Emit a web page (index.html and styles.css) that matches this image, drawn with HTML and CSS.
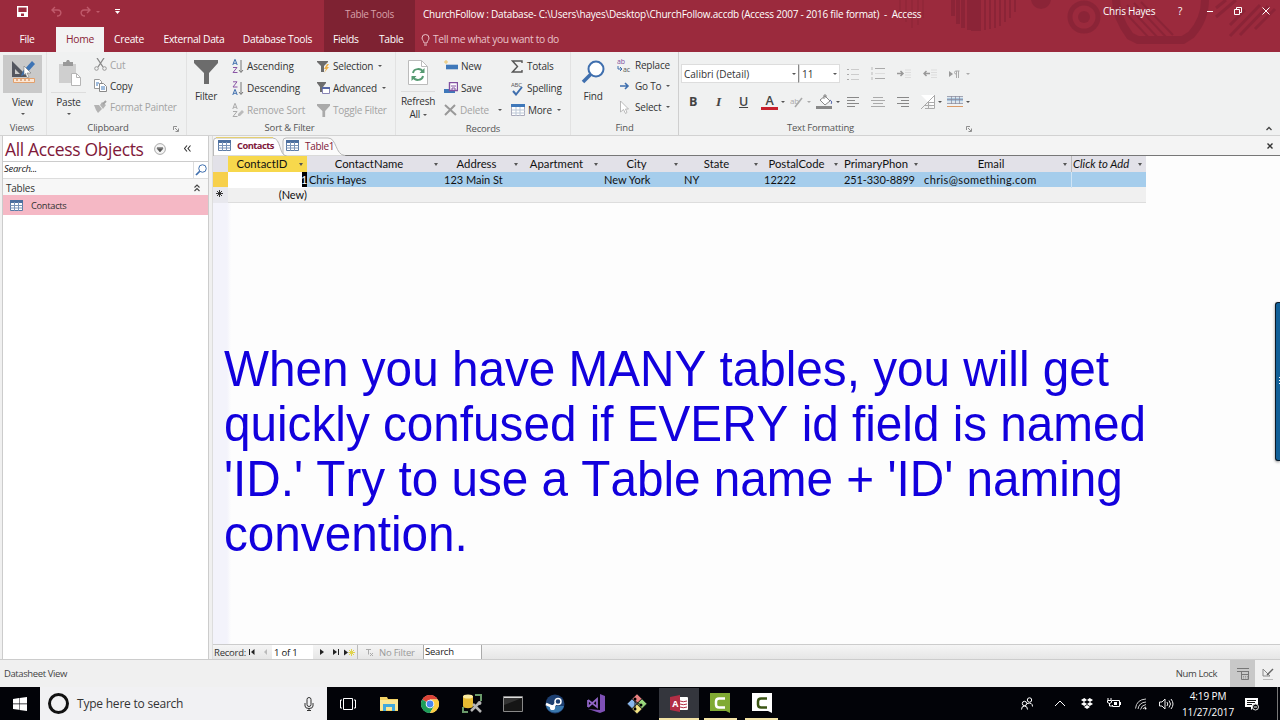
FILE: index.html
```
<!DOCTYPE html>
<html lang="en">
  <head>
    <meta charset="UTF-8" />
    <meta name="viewport" content="width=device-width, initial-scale=1.0" />
    <title>ChurchFollow : Database - Access</title>
    <link rel="stylesheet" href="styles.css">
  </head>
  <body>
    <svg class="defs" width="0" height="0">
      <symbol id="grid" viewBox="0 0 13 11">
        <path d="M.5.5h12v10H.5z" fill="#fff" stroke="#5d7ca6" />
        <path d="M0 0h13v3H0z" fill="#4c6f9f" />
        <path d="M.5 5.5h12M.5 8h12M4.5 2v9M8.5 2v9" stroke="#7a94b8" fill="none" />
      </symbol>
      <symbol id="funnel" viewBox="0 0 24 24">
        <path d="M0 0h24v3l-9 10v11h-5V13L0 3z" />
      </symbol>
      <symbol id="lens" viewBox="0 0 24 24">
        <circle cx="15" cy="9" r="7.5" fill="#fff" stroke="#3f6fae" stroke-width="2" />
        <path d="M9.5 14.500 2 22" stroke="#3f6fae" stroke-width="3.500" />
      </symbol>
      <symbol id="launch" viewBox="0 0 6 6">
        <path d="M.5 4V.5H4M2 2l3 3M5.500 2.500v3h-3" fill="none" stroke="#777" stroke-width=".8" />
      </symbol>
    </svg>

    <header class="top">
      <svg class="pattern" width="430" height="52" viewBox="0 0 430 52">
        <g stroke="#842235" stroke-width="2" fill="none" opacity=".65">
          <path d="M50 0v14M56 0v22M62 0v28M68 0v25M73 0v18" stroke-width="1" />
          <path d="M103 0v16M108 0v24M113 0v28M119 0v30" stroke-width="4" />
          <path d="M126 0v31" stroke-width="10" />
          <path d="M135 0v30M140 0v29M145 0v28M150 0v26M155 0v22M160 0v18M165 0v12" />
          <circle cx="191" cy="-1" r="9" fill="#842235" />
          <circle cx="234" cy="17" r="14" stroke-width="5" />
          <circle cx="234" cy="17" r="6" fill="#842235" stroke="none" />
          <path d="M266 0c0 12 5 24 14 36l8 4h45l8-5c9-10 14-22 14-35" stroke-width="8" />
          <path d="m270 7 30 32M277 5l32 34M284 3l32 34M291 2l32 33" />
          <path d="m395 10-15 15M410 5l-30 31M418 6l-28 29M425 9l-20 20M386 0l-20 17M376 0l-10 8" stroke-width="3" />
        </g>
      </svg>
      <div class="titlebar">
        <div class="quick">
          <svg width="11" height="11" viewBox="0 0 11 11"><path d="M.7.7h9.600v9.600H.7z" fill="none" stroke="#fff" stroke-width="1.400" /><path d="M1 6h9v4H1z" fill="#fff" /><path d="M4 7.500h3V10H4z" fill="#9b2a3d" /></svg>
          <svg class="undo" width="11" height="11" viewBox="0 0 11 11"><path d="M4 1 1 4l3 3M1 4h6c4 0 4 6-1 6" fill="none" stroke="#c05a6b" stroke-width="1.400" /></svg>
          <svg class="redo" width="11" height="11" viewBox="0 0 11 11"><path d="m7 1 3 3-3 3m3-3H4c-4 0-4 6 1 6" fill="none" stroke="#c05a6b" stroke-width="1.400" /></svg>
          <i class="caret dim"></i>
          <svg class="custom" width="5" height="5" viewBox="0 0 5 5"><path d="M0 .5h5" stroke="#fff" /><path d="M0 2h5L2.500 5z" fill="#fff" /></svg>
        </div>
        <div class="tools-title">Table Tools</div>
        <h1>ChurchFollow : Database- C:\Users\hayes\Desktop\ChurchFollow.accdb (Access 2007 - 2016 file format)&nbsp; -&nbsp; Access</h1>
        <div class="account">Chris Hayes</div>
        <div class="win">
          <span>?</span>
          <svg width="8" height="8" viewBox="0 0 8 8"><path d="M1 4.500h6" stroke="#fff" /></svg>
          <svg width="8" height="8" viewBox="0 0 8 8"><path d="M.5 2.500h5v5h-5zM2.500 2V.5h5v5H6" fill="none" stroke="#fff" /></svg>
          <svg width="8" height="8" viewBox="0 0 8 8"><path d="m.5.5 7 7m0-7-7 7" stroke="#fff" /></svg>
        </div>
      </div>
      <nav class="tabs">
        <a class="t-file">File</a>
        <a class="t-home active">Home</a>
        <a class="t-create">Create</a>
        <a class="t-ext">External Data</a>
        <a class="t-db">Database Tools</a>
        <div class="tools-tabs"><a>Fields</a><a>Table</a></div>
        <div class="tell">
          <svg width="9" height="12" viewBox="0 0 9 12"><path d="M3 9C3 7 1 6 1 4a3.500 3.500 0 0 1 7 0c0 2-2 3-2 5zM3 11h3" fill="none" stroke="#e9c3ca" /></svg>
          Tell me what you want to do
        </div>
      </nav>
    </header>

    <section class="ribbon">
      <div class="group g-views">
        <div class="body">
          <div class="big view">
            <div class="face">
              <svg width="26" height="26" viewBox="0 0 26 26">
                <path d="M2 1v16h16zm3 8 5 5H5z" fill="#53565f" fill-rule="evenodd" />
                <path d="m11 16 2-5L22 1l3 3-9 10z" fill="#3e74b5" />
                <path d="M3.500 18.500h21v4h-21z" fill="#fbe6d4" stroke="#e2a06c" />
                <path d="M7 19v2M11 19v2M15 19v2M19 19v2" stroke="#c9783d" />
                <path d="m14 6 7 7h-4l2 4-2 .5-1.500-4L14 15z" fill="#fff" stroke="#666" stroke-width=".5" />
              </svg>
            </div>
            <span>View</span><i class="caret"></i>
          </div>
        </div>
        <div class="label">Views</div>
      </div>

      <div class="group g-clip">
        <div class="body">
          <div class="big paste">
            <div class="face">
              <svg width="24" height="26" viewBox="0 0 24 26"><path d="M2 4h17v19H2z" fill="#cfcfcf" /><path d="M6 2h3l1-2h2l1 2h3v4H6z" fill="#999" /><path d="M14.500 13.500h5l4 4v8h-9z" fill="#fff" stroke="#b5b5b5" /><path d="M19.500 13.500v4h4" fill="none" stroke="#b5b5b5" /></svg>
            </div>
            <span>Paste</span><i class="caret"></i>
          </div>
          <div class="col tight">
            <div class="cmd off"><svg width="13" height="13" viewBox="0 0 13 13"><path d="m3 0 6 9M10 0 4 9" stroke="#888" stroke-width="1.300" /><circle cx="2.500" cy="10.500" r="1.800" fill="none" stroke="#999" /><circle cx="10.500" cy="10.500" r="1.800" fill="none" stroke="#999" /></svg>Cut</div>
            <div class="cmd"><svg width="13" height="13" viewBox="0 0 13 13"><path d="M.5.5h5l2 2v7h-7z" fill="#fff" stroke="#999" /><path d="M5.500 4.500h4l3 3v5h-7z" fill="#fff" stroke="#888" /><path d="M2 4h3M2 6h2M7 8h4M7 10h4" stroke="#3f78ba" /></svg>Copy</div>
            <div class="cmd off"><svg width="13" height="13" viewBox="0 0 13 13"><path d="M0 5h5l3 4-4 4-2-3zM6 5l2-3 4 3-3 4z" fill="#b3b3b3" /><path d="m9 4 3-3" stroke="#a2a2a2" stroke-width="2" /></svg>Format Painter</div>
          </div>
        </div>
        <div class="label">Clipboard<svg class="launch" width="6" height="6"><use href="#launch" /></svg></div>
      </div>

      <div class="group g-sort">
        <div class="body">
          <div class="big filter">
            <div class="face"><svg width="24" height="24" fill="#6c6c6c"><use href="#funnel" /></svg></div>
            <span>Filter</span>
          </div>
          <div class="col c-sort">
            <div class="cmd"><svg width="12" height="15" viewBox="0 0 12 15"><path d="m.8 6 2-5.500h.4l2 5.500M1.500 4.300h3" fill="none" stroke="#3f6fae" /><path d="M1 8.500h4L1 13.500h4.500" fill="none" stroke="#8a55a5" /><path d="M9 1v12M7 11l2 2.500 2-2.500" fill="none" stroke="#777" /></svg>Ascending</div>
            <div class="cmd"><svg width="12" height="15" viewBox="0 0 12 15"><path d="M1 .8h4L1 6h4.500" fill="none" stroke="#8a55a5" /><path d="m.8 14 2-5.500h.4l2 5.500M1.500 12.300h3" fill="none" stroke="#3f6fae" /><path d="M9 1v12M7 11l2 2.500 2-2.500" fill="none" stroke="#777" /></svg>Descending</div>
            <div class="cmd off"><svg width="12" height="15" viewBox="0 0 12 15"><path d="m.8 6 2-5.500h.4l2 5.500M1.500 4.300h3M1 8.500h4L1 13.500h4.500" fill="none" stroke="#aaa" /><path d="m6 11 4-4 2 2-4 4H6z" fill="#bbb" /></svg>Remove Sort</div>
          </div>
          <div class="col c-select">
            <div class="cmd"><svg width="13" height="13" viewBox="0 0 13 13"><path d="M0 1h11v1L7 6v6H4V6L0 2z" fill="#6c6c6c" /><path d="m10 4-3 5h2l-2 4 5-6h-2l2-3z" fill="#eeb14b" /></svg>Selection<i class="caret"></i></div>
            <div class="cmd"><svg width="13" height="13" viewBox="0 0 13 13"><path d="M0 0h9v1L6 5v5H3V5L0 1z" fill="#6c6c6c" /><path d="M5.500 5.500h7v6h-7z" fill="#fff" stroke="#8884b5" /><path d="M5 5h8v2H5z" fill="#5566a6" /></svg>Advanced<i class="caret"></i></div>
            <div class="cmd off"><svg width="13" height="13" viewBox="0 0 24 24" fill="#aaa"><use href="#funnel" /></svg>Toggle Filter</div>
          </div>
        </div>
        <div class="label">Sort &amp; Filter</div>
      </div>

      <div class="group g-rec">
        <div class="body">
          <div class="big refresh">
            <div class="face">
              <svg width="20" height="25" viewBox="0 0 20 25"><path d="M.5.5h13l6 6v18H.5z" fill="#fff" stroke="#bbb" /><path d="M13.500.5v6h6" fill="none" stroke="#bbb" /><path d="M5 13c1-5 8-5 10-1M15 16c-1 5-8 5-10 1" fill="none" stroke="#569a72" stroke-width="2" /><path d="M16.500 8v5h-5zM3.500 21v-5h5z" fill="#569a72" /></svg>
            </div>
            <span>Refresh</span><span class="all">All <i class="caret"></i></span>
          </div>
          <div class="col c-new">
            <div class="cmd"><svg width="14" height="12" viewBox="0 0 14 12"><path d="M2 5h12v4H2z" fill="#3f78ba" /><path d="M2 4.500h12M2 9.500h12" stroke="#bcd" /><path d="M2 0v4M0 2h4" stroke="#ecc469" /></svg>New</div>
            <div class="cmd"><svg width="14" height="12" viewBox="0 0 14 12"><path d="M0 7h11v4H0z" fill="#3f78ba" /><path d="M5.500.5h8v8h-8z" fill="#fff" stroke="#8150a0" stroke-width="1.400" /><path d="M7 4h5M8 8V6h3v2" stroke="#8150a0" fill="none" /></svg>Save</div>
            <div class="cmd off"><svg width="13" height="12" viewBox="0 0 13 12"><path d="m1 1 11 10M11 1 1 11" stroke="#999" stroke-width="2" /></svg>Delete<i class="caret wide"></i></div>
          </div>
          <div class="col c-tot">
            <div class="cmd"><svg width="13" height="13" viewBox="0 0 13 13"><path d="M11 3V1H1.500l5 5.500-5 5.500H11v-2" fill="none" stroke="#555" stroke-width="1.400" /></svg>Totals</div>
            <div class="cmd"><svg width="13" height="15" viewBox="0 0 13 15"><text x="0" y="5.500" class="abc">ABC</text><path d="m2 10 3 3.500L11 6" fill="none" stroke="#3f6fae" stroke-width="2" /></svg>Spelling</div>
            <div class="cmd"><svg width="14" height="12" viewBox="0 0 14 12"><path d="M.5.5h13v11H.5z" fill="#fff" stroke="#aab" /><path d="M0 0h14v3H0z" fill="#3f78ba" /><path d="M1 6h13M1 9h13M5 3v9M9 3v9" stroke="#bbc7d6" /></svg>More<i class="caret"></i></div>
          </div>
        </div>
        <div class="label">Records</div>
      </div>

      <div class="group g-find">
        <div class="body">
          <div class="big find">
            <div class="face"><svg width="24" height="24"><use href="#lens" /></svg></div>
            <span>Find</span>
          </div>
          <div class="col tight c-find">
            <div class="cmd"><svg width="15" height="16" viewBox="0 0 15 16"><text x="0" y="7" class="ab">ab</text><text x="6" y="15" class="ac">ac</text><path d="M1 9v3h4M3 10l2 2-2 2" fill="none" stroke="#3f6fae" /></svg>Replace</div>
            <div class="cmd"><svg width="15" height="10" viewBox="0 0 15 10"><path d="M3 5h8M8 2l3 3-3 3" fill="none" stroke="#3f6fae" stroke-width="1.600" /></svg>Go To<i class="caret"></i></div>
            <div class="cmd"><svg width="15" height="14" viewBox="0 0 15 14"><path d="M3.500 1v11l3-2.500 2 4 1.500-1-1.500-3.500h3z" fill="#fff" stroke="#aaa" stroke-width=".8" /></svg>Select<i class="caret"></i></div>
          </div>
        </div>
        <div class="label">Find</div>
      </div>

      <div class="group g-text">
        <div class="body textbody">
          <div class="row">
            <div class="combo font">Calibri (Detail)<i class="caret"></i></div>
            <div class="combo size">11<i class="caret"></i></div>
            <svg class="i1" width="12" height="12" viewBox="0 0 12 12"><path d="M0 1.500h2M0 6.500h2M0 11.500h2" stroke="#aaa" /><path d="M4 1.500h8M4 6.500h8M4 11.500h8" stroke="#ccc" /></svg>
            <svg width="14" height="13" viewBox="0 0 14 13"><path d="M1 0v3M1 5v3M1 10v3" stroke="#bbb" /><path d="M4 1.500h10M4 11.500h10" stroke="#aaa" /><path d="M4 6.500h10" stroke="#ddd" /></svg>
            <svg width="14" height="9" viewBox="0 0 14 9"><path d="M0 4.500h6M3.500 2 6 4.500 3.500 7" fill="none" stroke="#999" stroke-width="1.500" /><path d="M8 1h6M8 3.500h6M8 6h6M8 8.500h6" stroke="#ddd" /></svg>
            <svg width="14" height="9" viewBox="0 0 14 9"><path d="M7 4.500H1M3.500 2 1 4.500 3.500 7" fill="none" stroke="#999" stroke-width="1.500" /><path d="M8 1h6M8 3.500h6M8 6h6M8 8.500h6" stroke="#ddd" /></svg>
            <svg width="11" height="8" viewBox="0 0 11 8"><path d="m0 1 4 3-4 3z" fill="#999" /><path d="M7.500 1v7M9.500 1v7M10.500 1H7a1.500 1.500 0 0 0 0 3" fill="none" stroke="#aaa" /></svg>
            <i class="caret gray"></i>
          </div>
          <div class="row fmt">
            <b>B</b><em>I</em><u>U</u>
            <span class="fc">A</span><i class="caret"></i>
            <svg class="hl" width="13" height="12" viewBox="0 0 13 12"><text x="0" y="8" class="aby">ab</text><path d="m5 11 7-9" stroke="#aaa" stroke-width="1.600" /></svg><i class="caret gray"></i>
            <svg class="bucket" width="17" height="15" viewBox="0 0 17 15"><path d="m4 6 5-4 5 5-5 4z" fill="#fff" stroke="#888" /><path d="M8 5V1h2v3" fill="none" stroke="#888" /><path d="M14 6c2 1 2 3 1 4" stroke="#56a" fill="none" /><path d="M0 12h16v3H0z" fill="#888" /></svg><i class="caret"></i>
            <svg class="al first-al" width="12" height="10" viewBox="0 0 12 10"><path d="M0 .5h12M0 3.500h8M0 6.500h12M0 9.500h8" stroke="#888" /></svg>
            <svg class="al" width="14" height="10" viewBox="0 0 14 10"><path d="M2 .5h10M0 3.500h14M2 6.500h10M0 9.500h14" stroke="#aaa" /></svg>
            <svg class="al" width="12" height="10" viewBox="0 0 12 10"><path d="M0 .5h12M4 3.500h8M0 6.500h12M4 9.500h8" stroke="#888" /></svg>
            <svg class="gl" width="14" height="14" viewBox="0 0 14 14"><path d="M0 0h14v14z" fill="#fff" /><path d="M0 14 14 0M7.500 7v7M7 7.500h7M4 10.500h10M4 13.500h9.500V1" fill="none" stroke="#aaa" /></svg><i class="caret"></i>
            <svg class="alt" width="16" height="12" viewBox="0 0 16 12"><path d="M0 0h16v8H0z" fill="#dde6ee" /><path d="M0 2h16v3H0z" fill="#a9c4dc" /><path d="M0 .5h16M0 3.500h16M0 7.500h16M4.500 0v8M8.500 0v8M12.500 0v8" stroke="#889" stroke-width=".7" /><path d="M0 10.500h16" stroke="#db9b68" /></svg><i class="caret"></i>
          </div>
        </div>
        <div class="label">Text Formatting<svg class="launch" width="6" height="6"><use href="#launch" /></svg></div>
      </div>
      <svg class="collapse" width="6" height="5" viewBox="0 0 6 5"><path d="m.5 4 2.500-2.500L5.500 4" fill="none" stroke="#444" stroke-width="1.300" /></svg>
    </section>

    <main class="work">
      <aside class="nav">
        <div class="nav-head">
          <h2>All Access Objects</h2>
          <svg class="drop" width="12" height="12" viewBox="0 0 12 12"><circle cx="6" cy="6" r="5.400" fill="#f4f4f4" stroke="#aaa" /><path d="M3 4.500h6M3 5.500h6L6 9z" fill="#555" stroke="#555" stroke-width=".6" /></svg>
          <svg width="7" height="7" viewBox="0 0 7 7"><path d="M3 .5.500 3.500l2.500 3M6.500.5 4 3.500l2.500 3" fill="none" stroke="#333" stroke-width="1.100" /></svg>
        </div>
        <div class="nav-search"><span>Search...</span><svg width="12" height="12" viewBox="0 0 24 24"><use href="#lens" /></svg></div>
        <div class="nav-group">Tables<svg width="6" height="8" viewBox="0 0 6 8"><path d="M.5 3.500 3 1l2.500 2.500M.5 7 3 4.500 5.500 7" fill="none" stroke="#444" stroke-width="1.100" /></svg></div>
        <div class="nav-item"><svg width="13" height="11"><use href="#grid" /></svg>Contacts</div>
      </aside>

      <section class="doc">
        <div class="doc-tabs">
          <svg class="tab-shape" width="140" height="20" viewBox="0 0 140 20">
            <path d="M70 20V5q0-3 3-3h42c9 0 7 17 17 17.500V20z" fill="#fbfbfb" stroke="#b9b9b9" />
            <path d="M.5 20V5q0-3 3-3h56c9 0 6 17 14 18z" fill="#fff" stroke="#b9b9b9" />
            <path d="M3 1.500h57" stroke="#e5cf70" />
          </svg>
          <div class="doc-tab first"><svg width="13" height="11"><use href="#grid" /></svg>Contacts</div>
          <div class="doc-tab"><svg width="13" height="11"><use href="#grid" /></svg>Table1</div>
          <svg class="close" width="6" height="6" viewBox="0 0 6 6"><path d="m.5.5 5 5m0-5-5 5" stroke="#333" stroke-width="1.400" /></svg>
        </div>
        <div class="sheet">
          <div class="line head">
            <div class="sel"></div>
            <div class="on">ContactID<i class="caret"></i></div>
            <div>ContactName<i class="caret"></i></div>
            <div>Address<i class="caret"></i></div>
            <div>Apartment<i class="caret"></i></div>
            <div>City<i class="caret"></i></div>
            <div>State<i class="caret"></i></div>
            <div>PostalCode<i class="caret"></i></div>
            <div class="phone">PrimaryPhon<i class="caret"></i></div>
            <div>Email<i class="caret"></i></div>
            <div class="add">Click to Add<i class="caret"></i></div>
          </div>
          <div class="line current">
            <div class="sel"></div>
            <div class="id"><mark>1</mark></div>
            <div>Chris Hayes</div>
            <div>123 Main St</div>
            <div></div>
            <div>New York</div>
            <div>NY</div>
            <div>12222</div>
            <div class="number">251-330-8899</div>
            <div class="mail">chris@something.com</div>
            <div class="last"></div>
          </div>
          <div class="line new">
            <div class="sel"><svg width="7" height="7" viewBox="0 0 7 7"><path d="M3.500 0v7M0 3.500h7M1 1l5 5M6 1 1 6" stroke="#222" stroke-width=".9" /></svg></div>
            <div class="id">(New)</div>
          </div>
        </div>
        <p class="note">When you have MANY tables, you will get<br>quickly confused if EVERY id field is named<br>'ID.' Try to use a Table name + 'ID' naming<br>convention.</p>
        <div class="recbar">
          <span class="rec-label">Record:</span>
          <svg width="6" height="6" viewBox="0 0 6 6"><path d="M.5 0v6" stroke="#222" /><path d="M5.500 0v6L2 3z" fill="#222" /></svg>
          <svg class="prev" width="4" height="6" viewBox="0 0 4 6"><path d="M3 0v6L0 3z" fill="#bbb" /></svg>
          <span class="pos">1 of 1</span>
          <svg class="next" width="4" height="6" viewBox="0 0 4 6"><path d="M0 0v6l4-3z" fill="#222" /></svg>
          <svg class="end" width="6" height="6" viewBox="0 0 6 6"><path d="M5.500 0v6" stroke="#222" /><path d="M0 0v6l4-3z" fill="#222" /></svg>
          <svg class="newrec" width="11" height="7" viewBox="0 0 11 7"><path d="M0 .5v6l4-3z" fill="#222" /><path d="M7.500 0v7M4.500 3.500H11M5 1l5 5M10 1 5 6" stroke="#e0d34b" /></svg>
          <div class="nofilter"><svg width="7" height="7" viewBox="0 0 7 7"><path d="M0 .5h5M2.500.5v5M4 4l3 3M7 4 4 7" stroke="#aaa" /></svg>No Filter</div>
          <span class="rec-search">Search</span>
        </div>
      </section>
      <div class="side-tab"><i></i><i></i><i></i></div>
    </main>

    <footer class="status">
      <span>Datasheet View</span>
      <span class="num">Num Lock</span>
      <div class="vw on"><svg width="12" height="12" viewBox="0 0 12 12"><path d="M0 .5h12M0 3.500h12M4.500 3.500v8h7v-8M4.500 6.500h7" fill="none" stroke="#777" /><path d="M6 8.500h5M6 10h5" stroke="#999" stroke-dasharray="1 1" /></svg></div>
      <div class="vw"><svg width="12" height="12" viewBox="0 0 12 12"><path d="M1 1v7h7z" fill="none" stroke="#888" /><path d="m5 7 6-6" stroke="#666" stroke-width="1.500" /><path d="M1 11.500h10" stroke="#bbb" /></svg></div>
    </footer>

    <div class="taskbar">
      <div class="start"><svg width="14" height="14" viewBox="0 0 14 14"><path d="m0 2 6-.9v5.500H0zM6.500 1 14 0v6.600H6.500zM0 7.200h6v5.500L0 12zM6.500 7.200H14V14l-7.500-1z" fill="#fff" /></svg></div>
      <div class="search">
        <i class="ring"></i>Type here to search
        <svg width="10" height="14" viewBox="0 0 10 14"><path d="M3 2.500q0-2 2-2t2 2v5q0 2-2 2t-2-2zM1 6v3q0 2.500 4 2.500T9 9V6M5 11v2.500M3 13.500h4" fill="none" stroke="#333" /></svg>
      </div>
      <div class="apps">
        <div><svg width="16" height="12" viewBox="0 0 16 12"><path d="M3.500.5h9v11h-9zM2 2H.5v8H2M14 2h1.500v8H14" fill="none" stroke="#fff" /></svg></div>
        <div><svg width="18" height="15" viewBox="0 0 18 15"><path d="M0 1h7l1 2h10v12H0z" fill="#f3d365" /><path d="M0 4h18v10H0z" fill="#fbe796" /><path d="M3 15V8h12v7h-3v-4H6v4z" fill="#42a9dd" /></svg></div>
        <div><svg width="18" height="18" viewBox="0 0 18 18"><circle cx="9" cy="9" r="9" fill="#fff" /><path d="M9 9 1.200 4.500A9 9 0 0 1 16.800 4.500H9z" fill="#dc4437" /><path d="M9 9 1.200 4.500A9 9 0 0 0 9 18l4-6.800z" fill="#1d9d58" /><path d="M9 4.500h7.800A9 9 0 0 1 9 18l4-6.800z" fill="#fcce42" /><circle cx="9" cy="9" r="4.300" fill="#fff" /><circle cx="9" cy="9" r="3.400" fill="#4a87ee" /></svg></div>
        <div><svg width="20" height="19" viewBox="0 0 20 19"><path d="M1 2v10c0 3 10 3 10 0V2z" fill="#e6ba32" /><ellipse cx="6" cy="2.500" rx="5" ry="2" fill="#fbeb9f" /><path d="M13 1h6v6M1 13v5h5" fill="none" stroke="#6a9a6a" stroke-width="2" /><path d="m9 17 8-8m-6 1 8 8" stroke="#b5b5b5" stroke-width="2.500" /><circle cx="17.500" cy="9" r="2" fill="#b5b5b5" /></svg></div>
        <div><svg width="20" height="16" viewBox="0 0 20 16"><path d="M.5.500h19v15H.5z" fill="#151515" stroke="#888" /><path d="M1 1h18v1H1z" fill="#ddd" /><path d="M1 2h18L1 9z" fill="#333" /></svg></div>
        <div><svg width="20" height="20" viewBox="0 0 20 20"><circle cx="10" cy="10" r="9.500" fill="#1d3f70" /><path d="M1 12a9.500 9.500 0 0 0 18 0z" fill="#3a78ad" /><path d="m1 10 7 3 4-5" stroke="#fff" stroke-width="2.500" fill="none" /><circle cx="7.500" cy="13.500" r="2.600" fill="#fff" /><circle cx="13" cy="7.500" r="3" fill="#1d3f70" stroke="#fff" stroke-width="1.500" /></svg></div>
        <div><svg width="20" height="19" viewBox="0 0 20 19"><path d="m14 0 5 2v15l-5 2-12-4 12 1z" fill="#7e50b5" /><path d="M2 6v7M2 6l9 7V5l-9 8" fill="none" stroke="#8f64c4" stroke-width="1.800" /></svg></div>
        <div><svg width="20" height="20" viewBox="0 0 20 20"><g stroke="#222" stroke-width=".6"><path d="m10 0 4.800 4.800L10 9.600 5.200 4.800z" fill="#e98080" /><path d="m5 5 4.800 4.800L5 14.600.2 9.800z" fill="#88b6ec" /><path d="m15 5 4.800 4.800-4.800 4.800-4.800-4.800z" fill="#99d77c" /><path d="m10 10.200 4.800 4.800-4.800 4.800L5.200 15z" fill="#f4e584" /></g><path d="M8 4v11M8 7l6 4" stroke="#222" fill="none" /><circle cx="8" cy="15" r="1.500" /><circle cx="14" cy="11" r="1.500" /><circle cx="8" cy="5" r="1.500" /></svg></div>
        <div class="open current-app"><svg width="18" height="17" viewBox="0 0 18 17"><path d="M9 2h8q1 0 1 1v11q0 1-1 1H9z" fill="#fff" /><path d="M10 6q3 1.500 7 0M10 9q3 1.500 7 0M10 12q3 1.500 7 0" stroke="#b22e45" fill="none" /><path d="m0 2 10-2v17L0 15z" fill="#b22e45" /><text x="2.200" y="12" class="acc">A</text></svg></div>
        <div class="open"><svg width="20" height="20" viewBox="0 0 20 20"><path d="M0 0h20v20l-4-2H0z" fill="#80aa33" /><path d="M15 5.500H9q-3 0-3 3v3q0 3 3 3h6" fill="none" stroke="#fff" stroke-width="2.500" /></svg></div>
        <div class="open"><svg width="20" height="20" viewBox="0 0 20 20"><path d="M0 0h20v20l-4-2H0z" fill="#fff" /><path d="M15 5.500H9q-3 0-3 3v3q0 3 3 3h6" fill="none" stroke="#3b5514" stroke-width="2.500" /></svg></div>
      </div>
      <div class="tray">
        <svg width="12" height="13" viewBox="0 0 12 13"><circle cx="8.500" cy="3" r="2.200" fill="none" stroke="#fff" /><circle cx="3.500" cy="6.500" r="2.200" fill="none" stroke="#fff" /><path d="M.5 12.500q0-3.500 3-3.500t3 3.500M6 6.500q5.500-1.500 5.500 3" fill="none" stroke="#fff" /></svg>
        <svg class="up" width="12" height="7" viewBox="0 0 12 7"><path d="m1 6 5-5 5 5" fill="none" stroke="#fff" /></svg>
        <svg class="box" width="12" height="12" viewBox="0 0 12 12"><path d="m3.300 0 2.700 2-3 2L0 2zM8.700 0 6 2l3 2 3-2zM0 6l3-2 3 2-2.700 2zM12 6 9 4 6 6l2.700 2zM3 9l3-2 3 2-3 2z" fill="#fff" /></svg>
        <svg class="bat" width="14" height="11" viewBox="0 0 14 11"><path d="M5 2.500h7.500v6h-7V7M13.500 4v3M1 0v2M4 0v2M.5 2.500h4v2q-2 2-4 0zM2.500 5v3H5" fill="none" stroke="#fff" /><path d="M7 4h3v3H7z" fill="#fff" /></svg>
        <svg class="wifi" width="12" height="12" viewBox="0 0 12 12"><path d="M.5 10.500q1-9 10.500-9.500M3 11q1-6.500 8-7M5.500 11.500q1-4.500 5.500-5M8 11q1-2 3-2" fill="none" stroke="#ccc" /><circle cx="10.500" cy="10.500" r="1" fill="#fff" /></svg>
        <svg class="vol" width="15" height="12" viewBox="0 0 15 12"><path d="M.5 4v4h2.500l3 3V1L3 4zM8 4q1.500 2 0 4M10 2.500q3 3.500 0 7M12 1q4 5 0 10" fill="none" stroke="#eee" /></svg>
        <div class="clock"><span>4:19 PM</span><span>11/27/2017</span></div>
        <svg class="notif" width="14" height="14" viewBox="0 0 14 14"><path d="M0 1h13v9H9l-3 3v-3H0z" fill="#fff" /><path d="M2 3.500h9M2 5.500h8M2 7.500h5" stroke="#111" /><circle cx="10.500" cy="10" r="3" fill="#000" stroke="#ddd" /><path d="M9 10h3" stroke="#fff" /></svg>
      </div>
    </div>
  </body>
</html>
```

FILE: styles.css
```
* {
  margin: 0;
  padding: 0;
  box-sizing: border-box;
}
body {
  width: 1280px;
  height: 720px;
  overflow: hidden;
  display: flex;
  flex-direction: column;
  font-family: "Open Sans", "Noto Sans", sans-serif;
  font-size: 10px;
  letter-spacing: -0.22px;
  color: #333;
  background-color: #f0f0f0;
  white-space: nowrap;
}
svg {
  flex: none;
  display: block;
}
.defs {
  position: absolute;
}
.caret {
  display: inline-block;
  flex: none;
  border: 2px solid transparent;
  border-top-color: #555;
  border-bottom: 0;
}
.caret.dim {
  border-top-color: #c05a6b;
}
.caret.gray {
  border-top-color: #aaa;
}

/* title bar and tabs */
.top {
  position: relative;
  height: 52px;
  flex: none;
  background-color: #9b2a3d;
  color: #fff;
}
.pattern {
  position: absolute;
  left: 850px;
  top: 0;
}
.titlebar {
  position: relative;
  display: flex;
  height: 27px;
}
.quick {
  width: 324px;
  display: flex;
  align-items: center;
  padding: 0 0 4px 17px;
}
.undo {
  margin-left: 23px;
}
.redo {
  margin-left: 18px;
}
.quick .caret {
  margin-left: 5px;
}
.custom {
  margin-left: 15px;
}
.tools-title {
  width: 91px;
  background-color: #7e2232;
  color: #d9a0a9;
  text-align: center;
  line-height: 28px;
  letter-spacing: -0.35px;
}
h1 {
  width: 680px;
  padding-left: 8px;
  font-size: 10px;
  font-weight: 400;
  line-height: 28px;
}
.account {
  width: 77px;
  padding-left: 8px;
  line-height: 22px;
}
.win {
  display: flex;
  align-items: center;
  gap: 20px;
  height: 21px;
  padding-left: 6px;
}
.win span {
  width: 8px;
}
.tabs {
  position: relative;
  display: flex;
  height: 25px;
  line-height: 25px;
  font-size: 10.3px;
  letter-spacing: -0.3px;
}
.tabs a {
  text-align: center;
}
.t-file {
  width: 54px;
}
.t-home {
  width: 48px;
  margin-left: 2px;
}
.tabs .active {
  background-color: #f3f3f3;
  color: #8a2337;
}
.t-create {
  width: 50px;
}
.t-ext {
  width: 80px;
}
.t-db {
  width: 90px;
  padding-right: 3px;
}
.tools-tabs {
  width: 91px;
  background-color: #7e2232;
  display: flex;
}
.tools-tabs a:first-child {
  width: 44px;
}
.tools-tabs a:last-child {
  width: 48px;
}
.tell {
  display: flex;
  align-items: center;
  gap: 3px;
  padding-left: 6px;
  letter-spacing: -0.35px;
  color: #e9c3ca;
}

/* ribbon */
.ribbon {
  position: relative;
  display: flex;
  flex: none;
  height: 84px;
  background-color: #f0f1f1;
  border-bottom: 1px solid #d2d2d2;
}
.group {
  display: flex;
  flex-direction: column;
  border-right: 1px solid #e2e2e2;
}
.g-views { width: 47px; }
.g-clip { width: 140px; }
.g-sort { width: 209px; }
.g-rec { width: 175px; }
.g-find { width: 108px; border-right-color: #cfcfcf; }
.g-text { width: 295px; border: 0; }
.body {
  display: flex;
  height: 70px;
}
.label {
  position: relative;
  height: 14px;
  line-height: 14px;
  font-size: 9.5px;
  letter-spacing: -0.2px;
  text-align: center;
  color: #555;
}
.g-views .label { padding-right: 2px; }
.g-clip .label { padding-right: 17px; }
.g-sort .label { padding-right: 3px; }
.g-text .label { padding-right: 12px; }
.launch {
  position: absolute;
  right: 7px;
  top: 5px;
}
.g-text .launch {
  right: 2px;
}
.big {
  display: flex;
  flex-direction: column;
  align-items: center;
  padding-top: 3px;
}
.big .face {
  display: flex;
  justify-content: center;
  width: 100%;
  height: 38px;
  padding-top: 5px;
}
.big span {
  height: 18px;
  line-height: 18px;
}
.big > .caret {
  margin-top: 2px;
}
.view {
  width: 39px;
  margin-left: 3px;
}
.view .face {
  background-color: #c9c9c9;
}
.paste {
  width: 35px;
  margin-left: 4px;
}
.paste .face {
  border-bottom: 1px solid #ddd;
}
.filter {
  width: 30px;
  margin-left: 4px;
}
.filter span,
.find span {
  margin-top: -6px;
}
.refresh {
  width: 34px;
  margin-left: 5px;
}
.refresh .face {
  border-bottom: 1px solid #ddd;
}
.big .all {
  height: 12px;
  line-height: 8px;
}
.all .caret {
  vertical-align: 2px;
}
.find {
  width: 30px;
  margin-left: 7px;
}
.col {
  padding-top: 3px;
}
.tight {
  padding-top: 2px;
  margin-left: 8px;
}
.cmd {
  display: flex;
  align-items: center;
  height: 22px;
  gap: 3px;
}
.tight .cmd {
  height: 21px;
}
.cmd.off {
  color: #a3a3a3;
}
.cmd .caret {
  margin-left: 2px;
}
.cmd .wide {
  margin-left: 6px;
}
.c-sort {
  width: 86px;
  margin-left: 11px;
}
.c-sort .cmd {
  letter-spacing: -0.12px;
}
.c-select {
  margin-left: -1px;
}
.c-new {
  width: 67px;
  margin-left: 9px;
}
.abc {
  font-size: 6px;
  fill: #555;
}
.ab,
.ac {
  font-size: 7px;
  fill: #8150a0;
}
.ac {
  fill: #555;
}
.c-find {
  margin-left: 9px;
}
.textbody {
  flex-direction: column;
  padding: 12px 0 0 2px;
}
.row {
  display: flex;
  align-items: center;
  height: 19px;
}
.combo {
  display: flex;
  flex: none;
  align-items: center;
  justify-content: space-between;
  height: 19px;
  padding: 0 2px;
  background-color: #fff;
  border: 1px solid #ddd;
  letter-spacing: 0;
}
.font {
  width: 118px;
  border-right-color: #888;
}
.size {
  width: 41px;
}
.row .i1 {
  margin-left: 7px;
}
.row .i1 ~ svg {
  margin-left: 12px;
}
.row .gray {
  margin-left: 6px;
}
.fmt {
  margin-top: 9px;
  font-size: 12.5px;
  color: #444;
}
.fmt b,
.fmt em,
.fmt u {
  flex: none;
  width: 26px;
  padding-left: 8px;
}
.fmt em {
  width: 24px;
  padding-left: 9px;
  font-family: "Liberation Serif", serif;
  font-size: 13.5px;
  font-weight: 700;
}
.fmt u {
  width: 30px;
  padding-left: 8px;
  font-weight: 600;
}
.fc {
  flex: none;
  width: 17px;
  height: 16px;
  line-height: 14px;
  font-weight: 600;
  text-align: center;
  border-bottom: 3px solid #c8202c;
}
.fmt .caret { margin-left: 3px; }
.aby {
  font-size: 8px;
  fill: #aaa;
}
.hl { margin-left: 5px; }
.fmt .gray { margin-left: 4px; }
.bucket { margin-left: 5px; }
.al { margin-left: 12px; }
.first-al { margin-left: 7px; }
.gl { margin-left: 12px; }
.alt { margin-left: 5px; }
.collapse {
  position: absolute;
  right: 8px;
  bottom: 4px;
}

/* work area */
.work {
  position: relative;
  display: flex;
  height: 524px;
  flex: none;
  border-bottom: 1px solid #ccc;
}
.nav {
  width: 207px;
  margin: 0 3px 0 2px;
  background-color: #fff;
  border-left: 1px solid #ccc;
  border-right: 1px solid #ccc;
}
.nav-head {
  display: flex;
  align-items: center;
  height: 26px;
  padding-left: 2px;
  border-bottom: 1px solid #ccc;
}
h2 {
  width: 149px;
  font-size: 17.5px;
  font-weight: 400;
  letter-spacing: -0.35px;
  color: #80193a;
}
.drop {
  margin-right: 18px;
}
.nav-search {
  display: flex;
  align-items: center;
  height: 17px;
  padding-left: 1px;
  font-size: 9.5px;
  letter-spacing: -0.3px;
  font-style: italic;
  color: #222;
  border-bottom: 1px solid #ddd;
}
.nav-search span {
  width: 190px;
  height: 16px;
  border-right: 1px solid #ddd;
}
.nav-search svg {
  margin-left: 1px;
}
.nav-group {
  display: flex;
  align-items: center;
  justify-content: space-between;
  height: 16px;
  padding: 1px 8px 0 3px;
  background-color: #f7f7f7;
}
.nav-item {
  display: flex;
  align-items: center;
  gap: 8px;
  height: 20px;
  padding-left: 7px;
  font-size: 9.3px;
  letter-spacing: -0.3px;
  background-color: #f5b8c5;
}
.doc {
  width: 1068px;
  display: flex;
  flex-direction: column;
  background: linear-gradient(90deg, #f3f3fb 14px, #fdfdfd 18px);
  border-left: 1px solid #ddd;
}
.doc-tabs {
  position: relative;
  display: flex;
  height: 20px;
  background-color: #f4f4f4;
  border-bottom: 1px solid #777;
}
.tab-shape {
  position: absolute;
  left: 0;
  top: 0;
}
.doc-tab {
  position: relative;
  display: flex;
  align-items: center;
  gap: 6px;
  width: 69px;
  padding-left: 5px;
  letter-spacing: -0.3px;
  color: #80193a;
}
.first {
  width: 68px;
  font-weight: 700;
  font-size: 9.3px;
  letter-spacing: -0.5px;
}
.close {
  margin: 7px 7px 0 auto;
}
.sheet {
  width: 933px;
  font-family: Lato, "Open Sans", sans-serif;
  font-size: 11px;
  letter-spacing: 0;
  color: #111;
}
.line {
  display: grid;
  grid-template-columns: 15px 79px 135px 80px 80px 80px 80px 80px 80px 149px 75px;
  height: 16px;
  line-height: 16px;
}
.line div {
  padding-left: 2px;
}
.head {
  background-color: #e2e1e8;
  font-size: 11.3px;
}
.head div {
  position: relative;
  display: flex;
  justify-content: center;
  align-items: center;
  padding: 0 11px 0 0;
}
.head .caret {
  position: absolute;
  right: 4px;
  border-width: 2.5px;
  border-top-width: 3px;
  border-bottom: 0;
}
.line .on {
  background-color: #f7d84c;
}
.head .phone {
  justify-content: flex-start;
  padding-left: 2px;
}
.head .add {
  justify-content: flex-start;
  padding-left: 1px;
  font-style: italic;
  border-left: 1px solid #bbb;
}
.current {
  background-color: #a5cdec;
  height: 15px;
  line-height: 16px;
}
.current .sel {
  background-color: #f7d04c;
}
.current .last {
  border-left: 1px solid #cfe4f5;
}
.line .number {
  letter-spacing: -0.1px;
}
.line .mail {
  letter-spacing: 0.38px;
}
.line .id {
  text-align: right;
  padding: 0;
}
.current .id {
  background-color: #fff;
}
mark {
  display: inline-block;
  width: 5px;
  height: 15px;
  text-indent: -1px;
  background-color: #000;
  color: #fff;
}
.new {
  background-color: #f0f0f0;
  border-bottom: 1px solid #ddd;
}
.new .sel {
  padding: 3px 0 0 3px;
  background-color: #e8e8ee;
}
/* condensed a little, the letters are taller than they are wide */
.note {
  flex: 1;
  margin-left: 11px;
  padding-top: 138px;
  font-family: "Liberation Sans", Arial, sans-serif;
  font-size: 50.5px;
  line-height: 55px;
  letter-spacing: 0;
  font-kerning: none;
  color: #1200dd;
  transform: scaleX(0.944);
  transform-origin: 0 0;
}
.recbar {
  display: flex;
  align-items: center;
  height: 15px;
  background: linear-gradient(#f5f5f5, #e6e6e6);
  border-top: 1px solid #ccc;
  font-size: 9.5px;
}
.rec-label {
  width: 36px;
  padding-left: 1px;
}
.prev {
  margin-left: 9px;
}
.pos {
  width: 41px;
  margin-left: 4px;
  padding-left: 2px;
  height: 14px;
  line-height: 15px;
  background-color: #fff;
  color: #111;
}
.next { margin-left: 7px; }
.end { margin-left: 9px; }
.newrec { margin-left: 5px; }
.nofilter {
  display: flex;
  align-items: center;
  gap: 6px;
  width: 66px;
  height: 14px;
  margin-left: 2px;
  padding-left: 8px;
  border-left: 1px solid #bbb;
  color: #999;
}
.rec-search {
  width: 59px;
  height: 14px;
  line-height: 14px;
  padding-left: 1px;
  background-color: #fff;
  border: 1px solid #aaa;
  border-width: 0 1px;
  color: #222;
}
.side-tab {
  position: absolute;
  right: 0;
  top: 166px;
  width: 5px;
  height: 159px;
  padding-top: 74px;
  background-color: #126098;
  border: 1px solid #0b1a28;
  border-right: 0;
  border-radius: 3px 0 0 3px;
  box-shadow: 0 1px 3px #888;
}
.side-tab i {
  display: block;
  width: 1px;
  height: 1px;
  margin: 0 0 2px 3px;
  background-color: #fff;
}

/* status bar */
.status {
  display: flex;
  align-items: center;
  height: 27px;
  flex: none;
  padding-left: 4px;
  font-size: 9.5px;
  letter-spacing: -0.4px;
  color: #444;
  background-color: #f0f0f0;
}
.num {
  margin-left: auto;
  margin-right: 13px;
}
.vw {
  display: flex;
  align-items: center;
  justify-content: center;
  width: 25px;
  height: 27px;
}
.vw.on {
  background-color: #c8c8c8;
}

/* taskbar */
.taskbar {
  display: flex;
  height: 33px;
  flex: none;
  background-color: #020308;
  color: #fff;
}
.start {
  display: flex;
  align-items: center;
  justify-content: center;
  width: 40px;
}
.search {
  display: flex;
  align-items: center;
  width: 287px;
  padding: 0 13px 0 8px;
  background-color: #f1f1f3;
  color: #333;
  font-size: 12px;
}
.search svg {
  margin-left: auto;
}
.ring {
  width: 21px;
  height: 21px;
  margin-right: 8px;
  border: 3px solid #111;
  border-radius: 50%;
}
.apps {
  display: flex;
}
.apps div {
  display: flex;
  align-items: center;
  justify-content: center;
  width: 41.4px;
}
.apps .open {
  border-bottom: 2px solid #f2e3a5;
  width: 33px;
  margin: 0 4.2px;
}
.apps .current-app {
  width: 40px;
  margin: 1px 0.7px 0;
  background-color: #34363d;
}
.acc {
  font-size: 9px;
  font-weight: 700;
  fill: #fff;
}
.tray {
  display: flex;
  align-items: center;
  margin-left: auto;
  margin-right: 2px;
  padding-right: 18px;
  border-right: 1px solid #777;
}
.up { margin-left: 21px; }
.box { margin-left: 15px; }
.bat { margin-left: 14px; }
.wifi { margin-left: 14px; }
.vol { margin-left: 12px; }
.clock {
  display: flex;
  flex-direction: column;
  align-items: center;
  width: 56px;
  margin-left: 6px;
  line-height: 16px;
  letter-spacing: -0.1px;
}
.notif {
  margin-left: 9px;
}
```
